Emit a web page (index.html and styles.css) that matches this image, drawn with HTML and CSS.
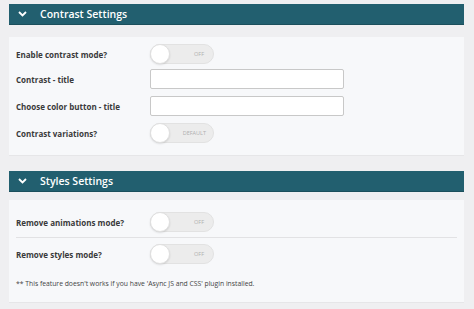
FILE: index.html
```html
<!DOCTYPE html>
<html lang="en">
<head>
  <meta charset="UTF-8">
  <title>Settings</title>
  <link rel="stylesheet" href="styles.css">
</head>
<body>
  <div class="page">
    <!-- Contrast Settings -->
    <div class="section-head">
      <svg class="chevron" width="9" height="6" viewBox="0 0 9 6"><path d="M1 1 L4.5 4.5 L8 1" fill="none" stroke="#fff" stroke-width="1.8"/></svg>
      <span>Contrast Settings</span>
    </div>
    <div class="panel panel-contrast">
      <div class="row">
        <label>Enable contrast mode?</label>
        <div class="toggle"><span class="knob"></span><span class="state">OFF</span></div>
      </div>
      <div class="row">
        <label for="contrast-title">Contrast - title</label>
        <input type="text" id="contrast-title">
      </div>
      <div class="row">
        <label for="color-title">Choose color button - title</label>
        <input type="text" id="color-title">
      </div>
      <div class="row">
        <label>Contrast variations?</label>
        <div class="toggle"><span class="knob"></span><span class="state wide">DEFAULT</span></div>
      </div>
    </div>

    <!-- Styles Settings -->
    <div class="section-head">
      <svg class="chevron" width="9" height="6" viewBox="0 0 9 6"><path d="M1 1 L4.5 4.5 L8 1" fill="none" stroke="#fff" stroke-width="1.8"/></svg>
      <span>Styles Settings</span>
    </div>
    <div class="panel panel-styles">
      <div class="row divided">
        <label>Remove animations mode?</label>
        <div class="toggle"><span class="knob"></span><span class="state">OFF</span></div>
      </div>
      <div class="row">
        <label>Remove styles mode?</label>
        <div class="toggle"><span class="knob"></span><span class="state">OFF</span></div>
      </div>
      <p class="note">** This feature doesn't works if you have 'Async JS and CSS' plugin installed.</p>
    </div>
  </div>
</body>
</html>
```

FILE: styles.css
```css
body {
  margin: 0;
  background-color: #efeff1;
  font-family: "Open Sans", Arial, sans-serif;
  color: #333;
}

.page {
  width: 455px;
  padding: 4px 0 0 9px;
}

.section-head {
  height: 21px;
  background-color: #225f6f;
  border-bottom: 1px solid #1b4f5c;
  box-sizing: border-box;
  display: flex;
  align-items: center;
  color: #fff;
  font-size: 10.5px;
  font-weight: 600;
}

.chevron {
  margin: 0 13px 0 9px;
}

.panel {
  background-color: #f7f8fa;
  padding: 7px 7px 12px 7px;
  border-bottom: 1px solid #e6e6e8;
}

.panel-contrast {
  margin-top: 12px;
  margin-bottom: 15px;
}

.panel-styles {
  margin-top: 8px;
  padding-top: 12px;
  padding-bottom: 14px;
}

.row {
  display: flex;
  align-items: center;
  margin-bottom: 7px;
}

.row:first-child {
  margin-bottom: 5px;
}

.row:last-child {
  margin-bottom: 0;
}

.row.divided {
  border-bottom: 1px solid #e2e2e4;
  padding-bottom: 5px;
  margin-bottom: 6px;
}

label {
  width: 134px;
  font-size: 8px;
  font-weight: 700;
  color: #3a3a3a;
}

input {
  width: 194px;
  height: 20px;
  box-sizing: border-box;
  border: 1px solid #c8c8c8;
  border-radius: 2px;
  background-color: #fff;
  margin: 0;
}

.toggle {
  width: 64px;
  height: 20px;
  box-sizing: border-box;
  border: 1px solid #e2e2e2;
  border-radius: 10px;
  background-color: #ececec;
  display: flex;
  align-items: center;
  justify-content: space-between;
}

.knob {
  width: 20px;
  height: 20px;
  margin-left: -1px;
  box-sizing: border-box;
  border-radius: 50%;
  background-color: #fff;
  border: 1px solid #e0e0e0;
  box-shadow: 0 1px 2px rgba(0, 0, 0, 0.12);
}

.state {
  font-size: 5.5px;
  color: #b0b0b0;
  margin-right: 9px;
}

.state.wide {
  margin-right: 7px;
}

.note {
  margin: 15px 0 0 0;
  font-size: 6.8px;
  color: #444;
}
```
